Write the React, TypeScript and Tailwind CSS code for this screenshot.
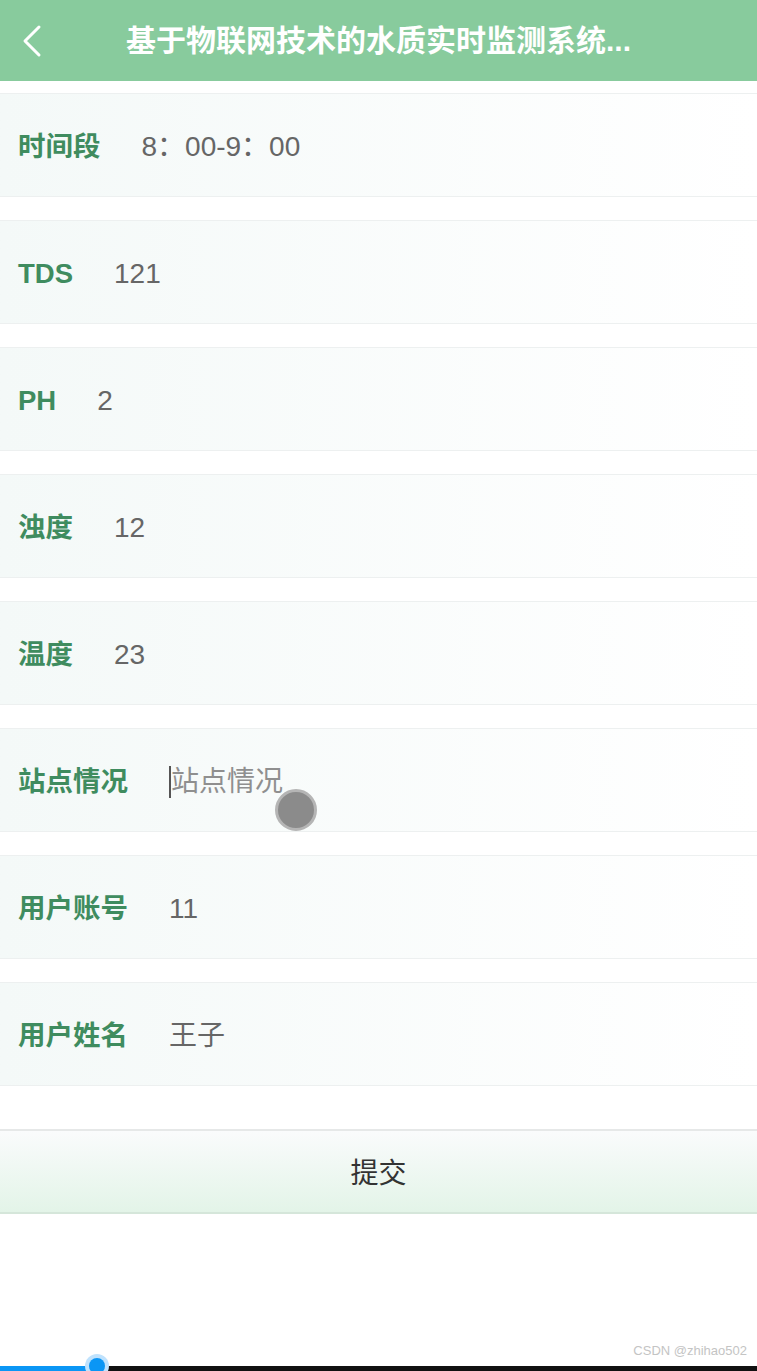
import React from "react";

type Field = {
  label: string;
  value: string;
  placeholder?: boolean;
};

const FIELDS: Field[] = [
  { label: "时间段", value: "8：00-9：00" },
  { label: "TDS", value: "121" },
  { label: "PH", value: "2" },
  { label: "浊度", value: "12" },
  { label: "温度", value: "23" },
  { label: "站点情况", value: "站点情况", placeholder: true },
  { label: "用户账号", value: "11" },
  { label: "用户姓名", value: "王子" },
];

const font = { fontFamily: '"Liberation Sans", "Noto Sans CJK SC", sans-serif' };

function FieldRow({ field }: { field: Field }) {
  return (
    <div className="flex h-[104px] items-center gap-[41px] border-y border-[#edf0f0] bg-gradient-to-r from-[#f4f9f8] to-white pl-[18px] pt-[4px]">
      <span className="text-[27.5px] font-bold text-[#3f8c5f]">{field.label}</span>
      <span className="flex items-center text-[28px]">
        {field.placeholder && <span className="h-[32px] w-[2px] bg-[#555]" />}
        <span className={field.placeholder ? "text-[#8f8f8f]" : "text-[#666]"}>
          {field.value}
        </span>
      </span>
    </div>
  );
}

export default function App() {
  return (
    <div className="relative flex h-[1371px] w-[757px] flex-col overflow-hidden bg-white" style={font}>
      <header className="flex h-[81px] items-center bg-[#88cb9d] pl-[20px]">
        <svg width="24" height="34" viewBox="0 0 24 34" fill="none">
          <polyline
            points="19,3 5,17 19,31"
            stroke="white"
            strokeWidth="3"
            strokeLinecap="round"
            strokeLinejoin="round"
          />
        </svg>
        <h1 className="ml-[82px] text-[30px] font-bold text-white">
          基于物联网技术的水质实时监测系统...
        </h1>
      </header>

      <main className="flex flex-col gap-[23px] pt-[12px]">
        {FIELDS.map((field) => (
          <FieldRow key={field.label} field={field} />
        ))}
      </main>

      <button
        type="button"
        className="mt-[43px] flex h-[85px] items-center justify-center border-y-2 border-t-[#e6e8e8] border-b-[#d5e6da] bg-gradient-to-b from-[#fafbfc] to-[#e3f4e8] pt-[4px] text-[28px] text-[#333]"
      >
        提交
      </button>

      <div className="mt-auto flex justify-end pb-[6px] pr-[10px] text-[13px] text-[#c4c4c4]">
        CSDN @zhihao502
      </div>

      {/* video scrub bar from the screen recording */}
      <div className="relative flex h-[5px] w-full bg-[#111]">
        <div className="w-[97px] bg-[#0a96f5]" />
        <div className="absolute left-[85px] top-[-12px] flex h-[24px] w-[24px] items-center justify-center rounded-full bg-[#bfe2fd]">
          <div className="h-[16px] w-[16px] rounded-full bg-[#0a96f5]" />
        </div>
      </div>

      {/* touch indicator from the screen recording */}
      <div className="absolute left-[275px] top-[789px] h-[42px] w-[42px] rounded-full border-[3px] border-[#b5b5b5] bg-[#8b8b8b]" />
    </div>
  );
}
